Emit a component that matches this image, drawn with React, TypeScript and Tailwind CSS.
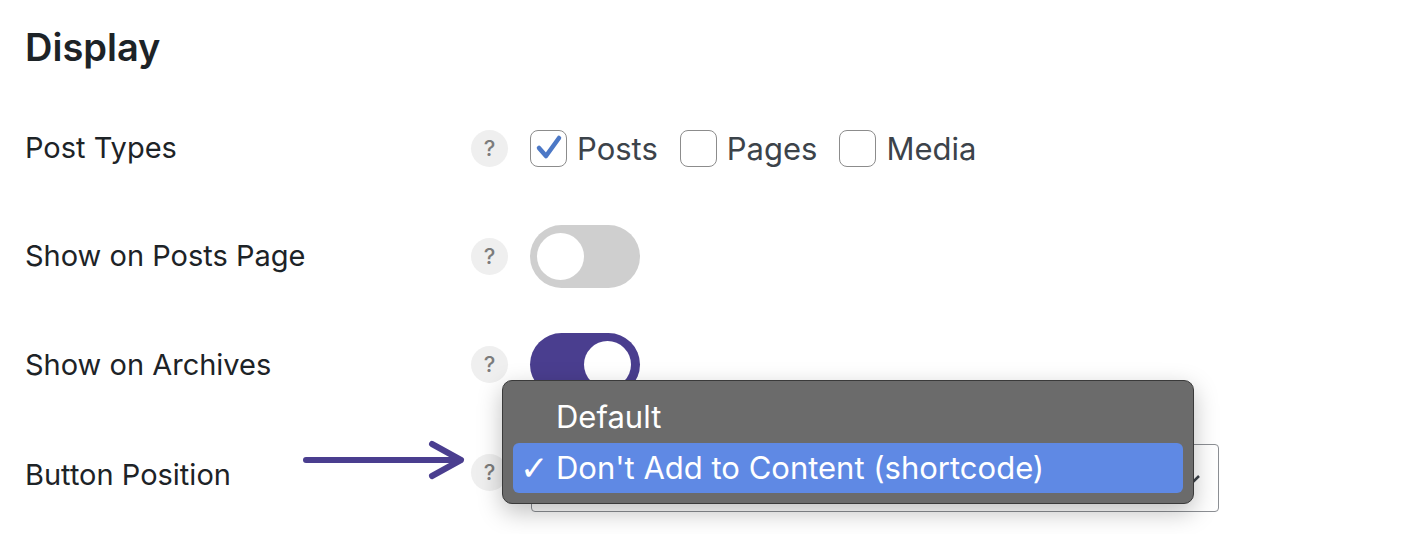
import React from 'react';

const font = { fontFamily: 'Inter, "Liberation Sans", sans-serif' };

const Help: React.FC = () => (
  <div className="w-[37px] h-[37px] rounded-full bg-[#efefef] flex items-center justify-center text-[22px] font-medium text-[#7c7c7c] shrink-0">
    ?
  </div>
);

const Checkbox: React.FC<{ checked?: boolean; label: string }> = ({ checked, label }) => (
  <label className="flex items-center gap-[10px]">
    <span className="w-[37px] h-[37px] rounded-[8px] border-[1.5px] border-[#8c8c8c] bg-white flex items-center justify-center">
      {checked && (
        <svg width="30" height="30" viewBox="0 0 30 30">
          <path d="M5 15 L12 23 L25 5" fill="none" stroke="#4c78c6" strokeWidth="4.5" strokeLinecap="round" strokeLinejoin="round" />
        </svg>
      )}
    </span>
    <span className="text-[31px] text-[#3c434a] leading-none">{label}</span>
  </label>
);

const Toggle: React.FC<{ on?: boolean }> = ({ on }) => (
  <div
    className={
      on
        ? 'w-[110px] h-[63px] rounded-full bg-[#4a3e8f] flex items-center justify-end pr-[9px]'
        : 'w-[110px] h-[63px] rounded-full bg-[#cfcfcf] flex items-center pl-[7px]'
    }
  >
    <div className="w-[47px] h-[47px] rounded-full bg-white" />
  </div>
);

const Row: React.FC<{ label: string; children: React.ReactNode; labelClass?: string }> = ({ label, children, labelClass }) => (
  <div className="h-[108px] grid grid-cols-[446px_37px_1fr] items-center">
    <div className={'text-[29px] text-[#1d2327] ' + (labelClass ?? '')}>{label}</div>
    <Help />
    <div className="pl-[22px] flex items-center">{children}</div>
  </div>
);

export default function App() {
  return (
    <div className="w-[1402px] h-[534px] bg-white overflow-hidden relative" style={font}>
      <div className="px-[25px] pt-[26px]">
        <h1 className="text-[38px] font-semibold text-[#1d2327] leading-[42px] h-[68px]">Display</h1>
        <Row label="Post Types">
          <div className="flex items-center gap-[22px]">
            <Checkbox checked label="Posts" />
            <Checkbox label="Pages" />
            <Checkbox label="Media" />
          </div>
        </Row>
        <Row label="Show on Posts Page">
          <Toggle />
        </Row>
        <Row label="Show on Archives" labelClass="mt-[2px]">
          <Toggle on />
        </Row>
        <Row label="Button Position" labelClass="mt-[6px]">
          <div className="relative mt-[12px] ml-[1px]">
            <div className="w-[688px] h-[68px] rounded-[4px] border-[1.5px] border-[#8c8f94] bg-white flex items-center justify-end pr-[16px]">
              <svg width="16" height="16" viewBox="0 0 16 16">
                <path d="M3 6 L8 11 L13 6" fill="none" stroke="#3c434a" strokeWidth="2.5" />
              </svg>
            </div>
            <div className="absolute left-[-29px] top-[-64px] w-[692px] h-[124px] rounded-[10px] bg-[#6b6b6b] border border-[#3a3a3a] shadow-[0_8px_24px_rgba(0,0,0,0.25)] px-[10px] pt-[10px]">
              <div className="h-[52px] flex items-center pl-[43px] text-[31px] text-white">Default</div>
              <div className="h-[50px] rounded-[6px] bg-[#5f89e4] flex items-center pl-[7px] text-[31px] text-white">
                <span className="w-[36px] text-[34px] font-bold" style={{ fontFamily: '"DejaVu Sans", sans-serif' }}>✓</span>
                <span>Don't Add to Content (shortcode)</span>
              </div>
            </div>
          </div>
        </Row>
      </div>
      <svg className="absolute left-[300px] top-[438px]" width="170" height="44" viewBox="0 0 170 44">
        <path d="M6 22 L160 22" stroke="#4a3e8f" strokeWidth="6" strokeLinecap="round" />
        <path d="M132 6 L161 22 L132 38" fill="none" stroke="#4a3e8f" strokeWidth="6" strokeLinecap="round" strokeLinejoin="round" />
      </svg>
    </div>
  );
}
